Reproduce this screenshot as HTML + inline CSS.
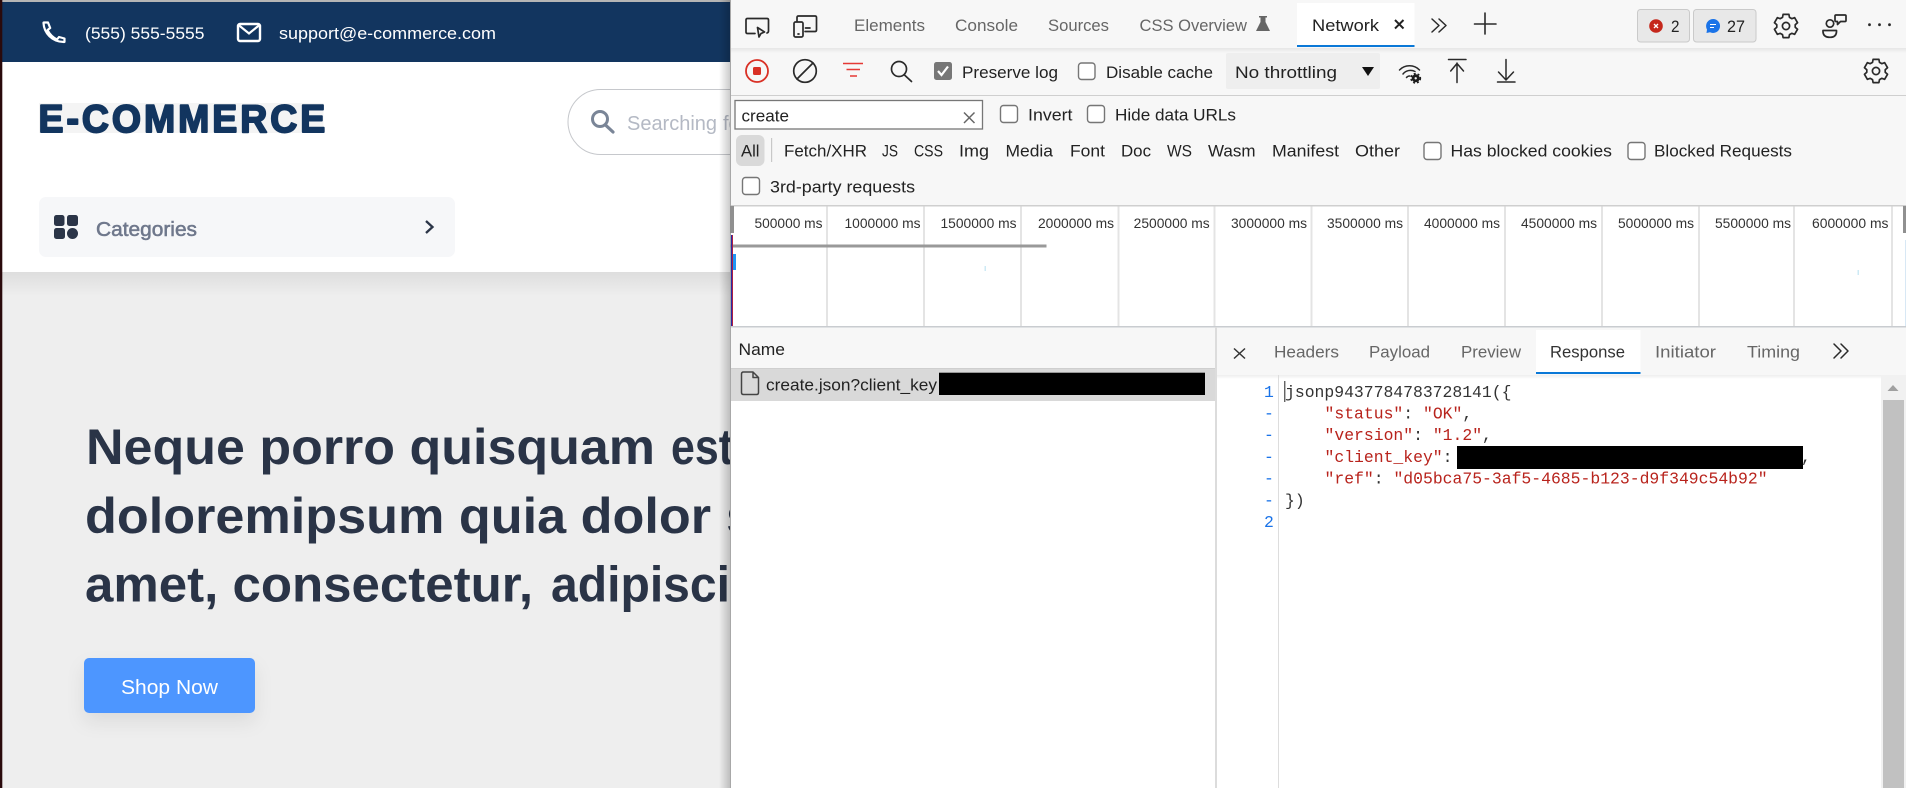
<!DOCTYPE html>
<html lang="en"><head><meta charset="utf-8"><title>E-Commerce with DevTools</title>
<style>
html,body{margin:0;padding:0;width:1906px;height:788px;overflow:hidden;background:#eee}
svg{display:block}
text{font-family:"Liberation Sans",sans-serif;font-size:17px;fill:#222;white-space:pre}
.t{fill:#666}.l{font-size:13.5px;fill:#333}
.m{font-family:"Liberation Mono",monospace;font-size:16.42px;fill:#333}
.r{fill:#b8231c}.n{fill:#1a73e8}
.i{fill:none;stroke:#2a2a2a;stroke-width:1.7;stroke-linecap:round;stroke-linejoin:round}
.c{fill:#fff;stroke:#767676;stroke-width:1.4}
.h{font-size:50px;font-weight:700;fill:#2a3447}
</style></head><body>
<svg width="1906" height="788" viewBox="0 0 1906 788" xmlns="http://www.w3.org/2000/svg">
<defs>
<linearGradient id="sl" x1="0" x2="1" y1="0" y2="0"><stop offset="0" stop-color="#000" stop-opacity="0"/><stop offset="1" stop-color="#000" stop-opacity=".2"/></linearGradient>
<linearGradient id="sd" x1="0" x2="0" y1="0" y2="1"><stop offset="0" stop-color="#000" stop-opacity=".07"/><stop offset="1" stop-color="#000" stop-opacity="0"/></linearGradient>
<filter id="bs" x="-30%" y="-50%" width="160%" height="220%"><feDropShadow dx="0" dy="9" stdDeviation="9" flood-color="#000" flood-opacity=".08"/></filter>
<g id="gear"><path class="i" d="M-3.48-8.62L-2.9-11.64L2.9-11.64L3.48-8.62L5.73-7.33L8.63-8.34L11.53-3.31L9.21-1.29L9.21 1.29L11.53 3.31L8.63 8.34L5.73 7.33L3.48 8.62L2.9 11.64L-2.9 11.64L-3.48 8.62L-5.73 7.33L-8.63 8.34L-11.53 3.31L-9.21 1.29L-9.21-1.29L-11.53-3.31L-8.63-8.34L-5.73-7.33Z"/><circle class="i" r="3.6"/></g>
</defs>

<!-- page -->
<rect width="730" height="788" fill="#eee"/>
<rect x="0" y="272" width="730" height="24" fill="url(#sd)"/>
<rect width="730" height="272" fill="#fff"/>
<rect width="730" height="2" fill="#b5b5b5"/>
<rect y="2" width="730" height="60" fill="#12355f"/>
<path d="M44 22.5H48L50.2 28L47.5 30C49.5 34 52 37 57 39.5L59 37L64.5 38.5V41.5Q64.5 42 64 42C52 42 44 33 43.5 23Q43.5 22.5 44 22.5Z" fill="none" stroke="#fff" stroke-width="2.2" stroke-linejoin="round"/>
<text x="85" y="39" style="fill:#fff" textLength="119.5" lengthAdjust="spacingAndGlyphs">(555) 555-5555</text>
<rect x="238" y="24" width="22" height="17" rx="2" fill="none" stroke="#fff" stroke-width="2.4"/>
<path d="M238.500 25L249 33.500L259.500 25" fill="none" stroke="#fff" stroke-width="2.2"/>
<text x="279" y="39" style="fill:#fff" textLength="217" lengthAdjust="spacingAndGlyphs">support@e-commerce.com</text>

<rect x="39" y="103" width="284.500" height="30" fill="#f4f4f4"/>
<text transform="translate(38.500 132) scale(.96 1)" style="font-size:39px;font-weight:700;fill:#12355f;stroke:#12355f;stroke-width:1.900;stroke-linejoin:round;letter-spacing:3.100px">E-COMMERCE</text>

<rect x="568" y="89.500" width="200" height="65" rx="32.500" fill="#fff" stroke="#c6c8cc"/>
<circle cx="600" cy="119" r="7.500" fill="none" stroke="#7a8597" stroke-width="3"/>
<path d="M605.500 125L613 132" stroke="#7a8597" stroke-width="3.200" stroke-linecap="round"/>
<text x="627" y="130" style="font-size:20px;fill:#b4b9c4" textLength="90" lengthAdjust="spacingAndGlyphs">Searching</text>
<text x="723" y="130" style="font-size:20px;fill:#b4b9c4">for</text>

<rect x="39" y="197" width="416" height="60" rx="7" fill="#f6f7f9"/>
<rect x="54" y="215" width="10.500" height="11" rx="2.500" fill="#2b3548"/>
<rect x="67" y="215" width="11" height="11" rx="2.500" fill="#2b3548"/>
<rect x="54" y="228" width="11" height="11" rx="2.500" fill="#2b3548"/>
<circle cx="72.500" cy="233.500" r="5.500" fill="#2b3548"/>
<text x="96" y="236" style="font-size:20px;fill:#6f788c;stroke:#6f788c;stroke-width:.55" textLength="101" lengthAdjust="spacingAndGlyphs">Categories</text>
<path d="M426 221L432.500 227L426 233" fill="none" stroke="#2b3548" stroke-width="2.300"/>

<text class="h" x="86" y="464" textLength="569" lengthAdjust="spacingAndGlyphs">Neque porro quisquam</text>
<text class="h" x="671" y="464" textLength="62" lengthAdjust="spacingAndGlyphs">est</text>
<text class="h" x="85" y="533" textLength="626" lengthAdjust="spacingAndGlyphs">doloremipsum quia dolor</text>
<text class="h" x="726.500" y="533" textLength="24" lengthAdjust="spacingAndGlyphs">s</text>
<text class="h" x="85" y="601.700" textLength="448" lengthAdjust="spacingAndGlyphs">amet, consectetur,</text>
<text class="h" x="551" y="601.700" textLength="179" lengthAdjust="spacingAndGlyphs">adipisci</text>

<rect x="84" y="658" width="171" height="55" rx="5" fill="#4d96ff" filter="url(#bs)"/>
<text x="121" y="694" style="font-size:20px;fill:#fff" textLength="97" lengthAdjust="spacingAndGlyphs">Shop Now</text>

<rect x="0" width="2.300" height="788" fill="#2a0a0c"/>
<rect x="719" width="11" height="788" fill="url(#sl)"/>

<!-- devtools -->
<rect x="730" width="1176" height="788" fill="#fff"/>
<rect x="730" width="1" height="788" fill="#a8a8a8"/>
<rect x="731" width="1175" height="205" fill="#f7f7f7"/>
<rect x="731" y="48" width="1175" height="5" fill="url(#sd)"/>
<rect x="731" y="95" width="1175" height="1" fill="#cfcfcf"/>
<rect x="731" y="205" width="1175" height="1.500" fill="#cfcfcf"/>

<!-- tab row -->
<path class="i" d="M755 33.500H747.500Q746 33.500 746 32V20Q746 18.500 747.500 18.500H767Q768.500 18.500 768.500 20V31Q768.500 32.500 767 33"/>
<path class="i" d="M757.500 27.500L764.500 32L761 33.500L759 37Z"/>
<path class="i" d="M797 21V17.500Q797 16 798.500 16H815Q816.500 16 816.500 17.500V30Q816.500 31.500 815 31.500H805"/>
<rect class="i" x="794" y="22" width="9" height="15" rx="1.500"/>
<path class="i" d="M805.500 28H810M798 34H799"/>
<text class="t" x="854" y="31" textLength="71" lengthAdjust="spacingAndGlyphs">Elements</text>
<text class="t" x="955" y="31" textLength="63" lengthAdjust="spacingAndGlyphs">Console</text>
<text class="t" x="1048" y="31" textLength="61" lengthAdjust="spacingAndGlyphs">Sources</text>
<text class="t" x="1139.500" y="31" textLength="107.500" lengthAdjust="spacingAndGlyphs">CSS Overview</text>
<path d="M1259 16H1267V17.500H1265.500V22L1270 31H1256L1260.500 22V17.500H1259Z" fill="#666"/>
<rect x="1297" y="3" width="117.500" height="44" fill="#fff"/>
<rect x="1297" y="45" width="117.500" height="2" fill="#0a78d7"/>
<text x="1312" y="31" textLength="67" lengthAdjust="spacingAndGlyphs">Network</text>
<path d="M1395 20L1403.500 28.500M1403.500 20L1395 28.500" stroke="#222" stroke-width="2"/>
<path class="i" d="M1432 19L1439 25.500L1432 32M1439 19L1446 25.500L1439 32" style="stroke-width:1.500"/>
<path class="i" d="M1485 13V34M1474.500 24H1496" style="stroke-width:1.600"/>

<rect x="1637.500" y="9.500" width="52" height="32.500" rx="3" fill="#e8e8e8" stroke="#cacaca"/>
<circle cx="1656" cy="26" r="6.800" fill="#c5281c"/>
<path d="M1654 24L1658 28M1658 24L1654 28" stroke="#fff" stroke-width="1.300"/>
<text x="1671" y="32" textLength="8.500" lengthAdjust="spacingAndGlyphs">2</text>
<rect x="1693.500" y="9.500" width="62.500" height="32.500" rx="3" fill="#e8e8e8" stroke="#cacaca"/>
<path d="M1713 19A7 7 0 1 1 1710 32.300L1706.500 33L1707 29.500A7 7 0 0 1 1713 19Z" fill="#1a73e8"/>
<path d="M1710 24.500H1716M1710 27.500H1714" stroke="#fff" stroke-width="1.100"/>
<text x="1727" y="32" textLength="18" lengthAdjust="spacingAndGlyphs">27</text>
<use href="#gear" transform="translate(1786 26)"/>
<circle class="i" cx="1830" cy="23.500" r="3.700"/>
<path class="i" d="M1823 30.500H1836.500V32Q1836 37.300 1830 37.300Q1823.500 37.300 1823 32Z"/>
<path class="i" d="M1836 15H1845Q1846 15 1846 16V20.500Q1846 21.500 1845 21.500H1840.500L1837.500 24.500V21.500H1836Q1835 21.500 1835 20.500V16Q1835 15 1836 15Z"/>
<circle cx="1869.500" cy="24.700" r="1.400" fill="#2a2a2a"/><circle cx="1879.500" cy="24.700" r="1.400" fill="#2a2a2a"/><circle cx="1889.500" cy="24.700" r="1.400" fill="#2a2a2a"/>

<!-- toolbar -->
<circle cx="757" cy="71" r="11" fill="none" stroke="#d93025" stroke-width="1.800"/>
<rect x="753" y="67" width="8" height="8" rx="1.500" fill="#d93025"/>
<circle class="i" cx="805" cy="71" r="11.300"/><path class="i" d="M797 79L813 63"/>
<path d="M843 63.500H863M846.500 69.500H860M850 76H857" stroke="#e53935" stroke-width="1.500"/>
<circle class="i" cx="899" cy="69" r="7.500"/><path class="i" d="M904.500 75L911.500 81.500"/>
<rect x="934" y="62" width="18" height="18" rx="2.500" fill="#777"/>
<path d="M938 71L941.500 75L948 66.500" fill="none" stroke="#fff" stroke-width="2.200"/>
<text x="962" y="78" textLength="96" lengthAdjust="spacingAndGlyphs">Preserve log</text>
<rect class="c" x="1078.500" y="63" width="16.500" height="16.500" rx="3"/>
<text x="1106" y="78" textLength="107" lengthAdjust="spacingAndGlyphs">Disable cache</text>
<rect x="1226" y="53" width="154" height="36" rx="2" fill="#eee"/>
<text x="1235" y="78" textLength="102" lengthAdjust="spacingAndGlyphs">No throttling</text>
<path d="M1362 67H1374L1368 76Z" fill="#111"/>
<path class="i" d="M1399.500 70A14 14 0 0 1 1419.500 70M1403 74A9.500 9.500 0 0 1 1415 71.500M1406.500 77.500A4 4 0 0 1 1410 76" style="stroke-width:1.500"/>
<circle cx="1415.700" cy="78.300" r="4" fill="#1c1c1c"/>
<circle cx="1415.700" cy="78.300" r="4.700" fill="none" stroke="#1c1c1c" stroke-width="1.500" stroke-dasharray="2 2"/>
<circle cx="1415.700" cy="78.300" r="1.200" fill="#f7f7f7"/>
<path class="i" d="M1448.500 59.500H1466M1457 63V82.500M1450.700 71L1457 63.500L1463.500 71" style="stroke-width:1.500"/>
<path class="i" d="M1506 59.500V80M1498.500 72L1506 80L1513.500 72M1497.500 82H1515" style="stroke-width:1.500"/>
<use href="#gear" transform="translate(1876 71)"/>

<!-- filter -->
<rect x="735" y="100.500" width="247.500" height="28.500" fill="#fff" stroke="#777" stroke-width="1.300"/>
<text x="741.500" y="121.500" textLength="47.500" lengthAdjust="spacingAndGlyphs">create</text>
<path d="M964 112.500L974.500 123M974.500 112.500L964 123" stroke="#666" stroke-width="1.500"/>
<rect class="c" x="1000.500" y="105.500" width="17" height="17" rx="3"/>
<text x="1028" y="120.500" textLength="44.500" lengthAdjust="spacingAndGlyphs">Invert</text>
<rect class="c" x="1087.500" y="105.500" width="17" height="17" rx="3"/>
<text x="1115" y="120.500" textLength="121" lengthAdjust="spacingAndGlyphs">Hide data URLs</text>

<rect x="736" y="135" width="28.500" height="31" rx="6" fill="#d9d9d9"/>
<text x="741" y="156.500" textLength="18.500" lengthAdjust="spacingAndGlyphs">All</text>
<rect x="771" y="138" width="1.200" height="24" fill="#c8c8c8"/>
<text x="784" y="156.500" textLength="83" lengthAdjust="spacingAndGlyphs">Fetch/XHR</text>
<text x="882" y="156.500" textLength="16" lengthAdjust="spacingAndGlyphs">JS</text>
<text x="914" y="156.500" textLength="29" lengthAdjust="spacingAndGlyphs">CSS</text>
<text x="959" y="156.500" textLength="30" lengthAdjust="spacingAndGlyphs">Img</text>
<text x="1005.500" y="156.500" textLength="47.500" lengthAdjust="spacingAndGlyphs">Media</text>
<text x="1070" y="156.500" textLength="35" lengthAdjust="spacingAndGlyphs">Font</text>
<text x="1121" y="156.500" textLength="30" lengthAdjust="spacingAndGlyphs">Doc</text>
<text x="1167" y="156.500" textLength="25" lengthAdjust="spacingAndGlyphs">WS</text>
<text x="1208" y="156.500" textLength="47.500" lengthAdjust="spacingAndGlyphs">Wasm</text>
<text x="1272" y="156.500" textLength="67" lengthAdjust="spacingAndGlyphs">Manifest</text>
<text x="1355" y="156.500" textLength="45" lengthAdjust="spacingAndGlyphs">Other</text>
<rect class="c" x="1424" y="142.500" width="17" height="17" rx="3"/>
<text x="1450.500" y="156.500" textLength="161.500" lengthAdjust="spacingAndGlyphs">Has blocked cookies</text>
<rect class="c" x="1628" y="142.500" width="17" height="17" rx="3"/>
<text x="1654" y="156.500" textLength="138" lengthAdjust="spacingAndGlyphs">Blocked Requests</text>
<rect class="c" x="742.500" y="177.500" width="17" height="17" rx="3"/>
<text x="770" y="192.500" textLength="145" lengthAdjust="spacingAndGlyphs">3rd-party requests</text>

<!-- timeline -->
<g fill="#e4e4e4">
<rect x="826" y="206.500" width="2" height="120"/><rect x="923" y="206.500" width="2" height="120"/><rect x="1020" y="206.500" width="2" height="120"/><rect x="1117.500" y="206.500" width="2" height="120"/><rect x="1213.500" y="206.500" width="2" height="120"/><rect x="1310.500" y="206.500" width="2" height="120"/><rect x="1407" y="206.500" width="2" height="120"/><rect x="1504" y="206.500" width="2" height="120"/><rect x="1601" y="206.500" width="2" height="120"/><rect x="1698" y="206.500" width="2" height="120"/><rect x="1793" y="206.500" width="2" height="120"/><rect x="1891" y="206.500" width="2" height="120"/>
</g>
<rect x="730" y="206" width="4" height="27" fill="#909090"/>
<rect x="1903" y="206" width="3" height="27" fill="#909090"/>
<rect x="730" y="244.500" width="316.500" height="3" fill="#999"/>
<rect x="731" y="235" width="1" height="91" fill="#2a2aa5"/>
<rect x="732" y="235" width="1" height="91" fill="#b02040"/>
<rect x="733" y="254" width="3" height="16" fill="#2196f3"/>
<rect x="984.500" y="266" width="1.500" height="5" fill="#cdeaf5"/>
<rect x="1857.500" y="270" width="1.500" height="5" fill="#cdeaf5"/>
<rect x="1905" y="240" width="1" height="86" fill="#d8e8f5"/>
<text class="l" x="754.500" y="228" textLength="68" lengthAdjust="spacingAndGlyphs">500000 ms</text>
<text class="l" x="844.500" y="228" textLength="76" lengthAdjust="spacingAndGlyphs">1000000 ms</text>
<text class="l" x="940.500" y="228" textLength="76" lengthAdjust="spacingAndGlyphs">1500000 ms</text>
<text class="l" x="1038" y="228" textLength="76" lengthAdjust="spacingAndGlyphs">2000000 ms</text>
<text class="l" x="1133.700" y="228" textLength="76" lengthAdjust="spacingAndGlyphs">2500000 ms</text>
<text class="l" x="1231" y="228" textLength="76" lengthAdjust="spacingAndGlyphs">3000000 ms</text>
<text class="l" x="1327" y="228" textLength="76" lengthAdjust="spacingAndGlyphs">3500000 ms</text>
<text class="l" x="1424" y="228" textLength="76" lengthAdjust="spacingAndGlyphs">4000000 ms</text>
<text class="l" x="1521" y="228" textLength="76" lengthAdjust="spacingAndGlyphs">4500000 ms</text>
<text class="l" x="1618" y="228" textLength="76" lengthAdjust="spacingAndGlyphs">5000000 ms</text>
<text class="l" x="1715" y="228" textLength="76" lengthAdjust="spacingAndGlyphs">5500000 ms</text>
<text class="l" x="1812" y="228" textLength="76.500" lengthAdjust="spacingAndGlyphs">6000000 ms</text>

<!-- split panes -->
<rect x="731" y="326" width="1175" height="1.500" fill="#c9ccd0"/>
<rect x="731" y="327.500" width="484" height="40.500" fill="#f7f7f7"/>
<rect x="731" y="368" width="484" height="1" fill="#cfcfcf"/>
<rect x="731" y="369" width="484" height="32" fill="#d9d9d9"/>
<rect x="1215" y="327" width="2" height="461" fill="#dcdcdc"/>
<text x="738.500" y="355" textLength="46.500" lengthAdjust="spacingAndGlyphs">Name</text>
<path class="i" d="M743.500 372H753L758.500 377.500V392.500Q758.500 394.500 756.500 394.500H743.500Q741.500 394.500 741.500 392.500V374Q741.500 372 743.500 372ZM753 372.500V377.500H758" style="stroke:#444;stroke-width:1.500"/>
<text x="766" y="390.500" textLength="171" lengthAdjust="spacingAndGlyphs">create.json?client_key</text>
<rect x="939" y="372.700" width="266" height="22.300" fill="#000"/>

<rect x="1217" y="327.500" width="689" height="47.500" fill="#f7f7f7"/>
<rect x="1217" y="375" width="689" height="4" fill="url(#sd)"/>
<path d="M1234 348.500L1245 358.500M1245 348.500L1234 358.500" stroke="#333" stroke-width="1.500"/>
<text class="t" x="1274" y="357.500" textLength="65" lengthAdjust="spacingAndGlyphs">Headers</text>
<text class="t" x="1369" y="357.500" textLength="61" lengthAdjust="spacingAndGlyphs">Payload</text>
<text class="t" x="1461" y="357.500" textLength="60" lengthAdjust="spacingAndGlyphs">Preview</text>
<rect x="1536" y="330" width="104.500" height="44" fill="#fff"/>
<rect x="1536" y="372" width="104.500" height="2" fill="#0a78d7"/>
<text x="1550" y="357.500" textLength="75" lengthAdjust="spacingAndGlyphs" style="fill:#333">Response</text>
<text class="t" x="1655" y="357.500" textLength="61" lengthAdjust="spacingAndGlyphs">Initiator</text>
<text class="t" x="1747" y="357.500" textLength="53" lengthAdjust="spacingAndGlyphs">Timing</text>
<path class="i" d="M1834 344L1841 351L1834 358M1841 344L1848 351L1841 358" style="stroke-width:1.500"/>

<!-- code -->
<rect x="1278" y="375" width="1" height="413" fill="#ddd"/>
<text class="m n" x="1264" y="397">1</text>
<text class="m n" x="1264" y="418.700">-</text>
<text class="m n" x="1264" y="440">-</text>
<text class="m n" x="1264" y="462">-</text>
<text class="m n" x="1264" y="483.700">-</text>
<text class="m n" x="1264" y="505.500">-</text>
<text class="m n" x="1264" y="527">2</text>
<rect x="1284.300" y="381" width="1" height="21" fill="#222"/>
<text class="m" x="1285" y="397">jsonp9437784783728141({</text>
<text class="m" x="1324.500" y="418.700"><tspan class="r">"status"</tspan>: <tspan class="r">"OK"</tspan>,</text>
<text class="m" x="1324.500" y="440"><tspan class="r">"version"</tspan>: <tspan class="r">"1.2"</tspan>,</text>
<text class="m" x="1324.500" y="462"><tspan class="r">"client_key"</tspan>:</text>
<text class="m" x="1801" y="462">,</text>
<rect x="1457" y="446" width="346" height="23" fill="#000"/>
<text class="m" x="1324.500" y="483.700"><tspan class="r">"ref"</tspan>: <tspan class="r">"d05bca75-3af5-4685-b123-d9f349c54b92"</tspan></text>
<text class="m" x="1285" y="505.500">})</text>

<!-- scrollbar -->
<rect x="1881" y="375" width="25" height="413" fill="#f1f1f1"/>
<path d="M1887.500 391L1893 385L1898.500 391Z" fill="#a0a0a0"/>
<rect x="1883" y="400" width="21" height="388" fill="#c1c1c1"/>
</svg>
</body></html>
